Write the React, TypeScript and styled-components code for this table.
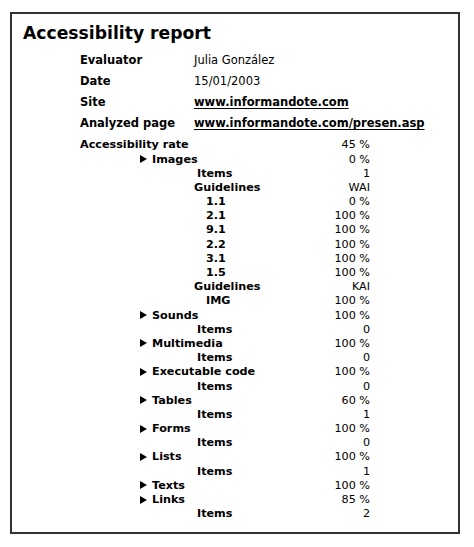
import React from 'react';
import styled, { createGlobalStyle } from 'styled-components';

const Global = createGlobalStyle`
  html, body { margin: 0; padding: 0; background: #fff; }
  body { font-family: "DejaVu Sans", Verdana, sans-serif; color: #000; }
`;

const Page = styled.div`
  box-sizing: border-box;
  width: 474px;
  height: 547px;
  padding: 12px 0 0 10px;
`;

const Card = styled.section`
  box-sizing: border-box;
  width: 450px;
  height: 522px;
  border: 2px solid #333;
  padding-top: 7px;
`;

const Title = styled.h1`
  margin: 0 0 0 11px;
  font-size: 17.2px;
  line-height: 24px;
  font-weight: bold;
`;

const Meta = styled.dl`
  display: grid;
  grid-template-columns: 114px auto;
  grid-auto-rows: 21.2px;
  align-items: center;
  margin: 4px 0 0 68px;
  font-size: 11.5px;
`;

const MetaLabel = styled.dt`
  font-weight: bold;
`;

const MetaValue = styled.dd<{ $link?: boolean }>`
  margin: 0;
  font-weight: ${(p) => (p.$link ? 'bold' : 'normal')};
  text-decoration: ${(p) => (p.$link ? 'underline' : 'none')};
  text-underline-offset: 2px;
`;

const Tree = styled.div`
  margin: 4px 0 0 68px;
  width: 290px;
  font-size: 11.2px;
`;

const Row = styled.div`
  display: flex;
  justify-content: space-between;
  align-items: center;
  height: 14.2px;
`;

const Label = styled.span<{ $indent: number }>`
  display: flex;
  align-items: center;
  padding-left: ${(p) => p.$indent}px;
  font-weight: bold;
  white-space: nowrap;
`;

const Arrow = styled.span`
  width: 0;
  height: 0;
  border-top: 4px solid transparent;
  border-bottom: 4px solid transparent;
  border-left: 7px solid #000;
  margin-right: 5px;
`;

const Value = styled.span`
  white-space: nowrap;
`;

type Item = { label: string; value: string; indent: number; arrow?: boolean };

const items: Item[] = [
  { label: 'Accessibility rate', value: '45 %', indent: 0 },
  { label: 'Images', value: '0 %', indent: 60, arrow: true },
  { label: 'Items', value: '1', indent: 117 },
  { label: 'Guidelines', value: 'WAI', indent: 114 },
  { label: '1.1', value: '0 %', indent: 126 },
  { label: '2.1', value: '100 %', indent: 126 },
  { label: '9.1', value: '100 %', indent: 126 },
  { label: '2.2', value: '100 %', indent: 126 },
  { label: '3.1', value: '100 %', indent: 126 },
  { label: '1.5', value: '100 %', indent: 126 },
  { label: 'Guidelines', value: 'KAI', indent: 114 },
  { label: 'IMG', value: '100 %', indent: 126 },
  { label: 'Sounds', value: '100 %', indent: 60, arrow: true },
  { label: 'Items', value: '0', indent: 117 },
  { label: 'Multimedia', value: '100 %', indent: 60, arrow: true },
  { label: 'Items', value: '0', indent: 117 },
  { label: 'Executable code', value: '100 %', indent: 60, arrow: true },
  { label: 'Items', value: '0', indent: 117 },
  { label: 'Tables', value: '60 %', indent: 60, arrow: true },
  { label: 'Items', value: '1', indent: 117 },
  { label: 'Forms', value: '100 %', indent: 60, arrow: true },
  { label: 'Items', value: '0', indent: 117 },
  { label: 'Lists', value: '100 %', indent: 60, arrow: true },
  { label: 'Items', value: '1', indent: 117 },
  { label: 'Texts', value: '100 %', indent: 60, arrow: true },
  { label: 'Links', value: '85 %', indent: 60, arrow: true },
  { label: 'Items', value: '2', indent: 117 },
];

export default function App() {
  return (
    <Page>
      <Global />
      <Card>
        <Title>Accessibility report</Title>
        <Meta>
          <MetaLabel>Evaluator</MetaLabel>
          <MetaValue>Julia González</MetaValue>
          <MetaLabel>Date</MetaLabel>
          <MetaValue>15/01/2003</MetaValue>
          <MetaLabel>Site</MetaLabel>
          <MetaValue $link>www.informandote.com</MetaValue>
          <MetaLabel>Analyzed page</MetaLabel>
          <MetaValue $link>www.informandote.com/presen.asp</MetaValue>
        </Meta>
        <Tree>
          {items.map((it, i) => (
            <Row key={i}>
              <Label $indent={it.indent}>
                {it.arrow && <Arrow />}
                {it.label}
              </Label>
              <Value>{it.value}</Value>
            </Row>
          ))}
        </Tree>
      </Card>
    </Page>
  );
}
